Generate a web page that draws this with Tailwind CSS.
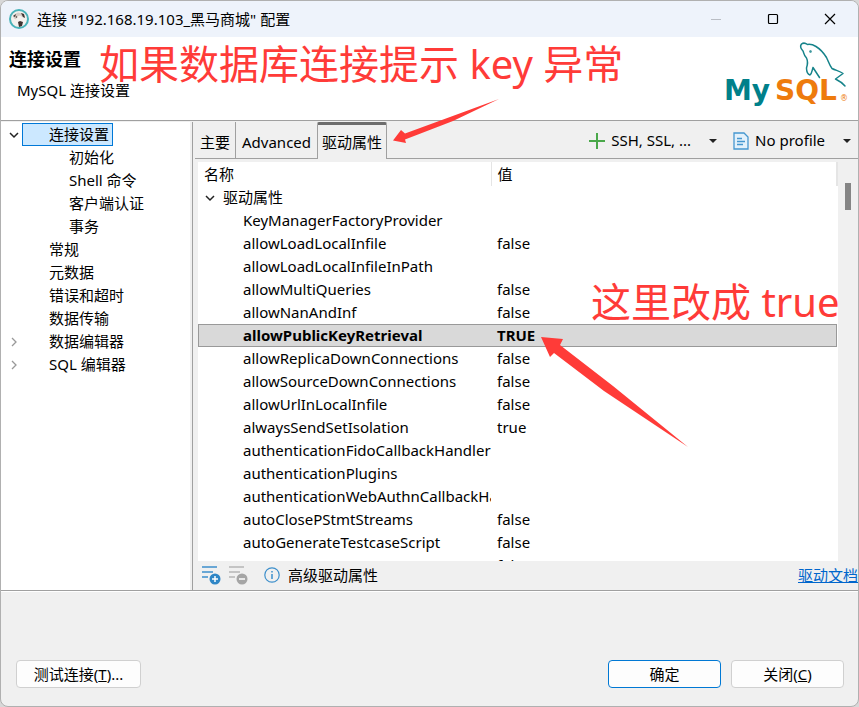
<!DOCTYPE html>
<html lang="zh-CN">
<head>
    <meta charset="UTF-8">
    <meta name="viewport" content="width=device-width, initial-scale=1.0">
    <title>连接 "192.168.19.103_黑马商城" 配置</title>
    <script src="https://cdn.jsdelivr.net/npm/@tailwindcss/browser@4"></script>
</head>

<body class="bg-[#d8d8d8] font-['Noto_Sans','Noto_Sans_CJK_SC',sans-serif] text-[15px] leading-[23px] text-black">
    <div class="relative flex h-screen flex-col overflow-hidden rounded-lg border border-[#b0b0b0] bg-[#f0f0f0]">
        <!-- 标题栏 -->
        <header class="flex h-9 shrink-0 items-center bg-[#eef3fb] pl-2">
            <svg class="mr-2 size-5 shrink-0" viewBox="0 0 20 20">
                <circle cx="10" cy="10" r="9" fill="#f4f1ee" stroke="#49b3b9" stroke-width="2" />
                <path d="M4 7q2-3 5-3.500l5 1 2 3-2 1-3-2-3 1-1 3-2-1z" fill="#d6cec8" />
                <path d="M4 7l3-2-1 3zM12 4l3 1 1 4-2-1zM9 13l2-1 3 1-1 4-3 1z" fill="#3f3431" />
                <circle cx="7.500" cy="8" r="0.800" fill="#3f3431" />
            </svg>
            <h1>连接 "192.168.19.103_黑马商城" 配置</h1>
            <div class="ml-auto flex">
                <button class="flex h-9 w-[57px] items-center justify-center" aria-label="最小化" disabled>
                    <svg class="size-3" viewBox="0 0 12 12"><path d="M1 6.500h10" stroke="#b9bdc4" /></svg>
                </button>
                <button class="flex h-9 w-[57px] items-center justify-center" aria-label="最大化">
                    <svg class="size-3" viewBox="0 0 12 12" fill="none"><rect x="1.500" y="1.500" width="9" height="9" rx="1" stroke="#000" stroke-width="1.200" /></svg>
                </button>
                <button class="flex h-9 w-[57px] items-center justify-center" aria-label="关闭窗口">
                    <svg class="size-3" viewBox="0 0 12 12"><path d="M1 1l10 10M11 1L1 11" stroke="#000" stroke-width="1.200" /></svg>
                </button>
            </div>
        </header>

        <!-- 页头 -->
        <section class="flex h-[84px] shrink-0 justify-between border-b border-[#a0a0a0] bg-white pr-2">
            <div class="pl-2 pt-[11px]">
                <h2 class="text-lg leading-[23px] font-bold">连接设置</h2>
                <p class="pl-2 pt-2">MySQL 连接设置</p>
            </div>
            <svg class="h-[72px] w-32" viewBox="0 0 128 72" role="img" aria-label="MySQL">
                <g fill="none" stroke="#16838a" stroke-width="1.500" stroke-linejoin="round" stroke-linecap="round">
                    <path d="M97.500 40.500L91 30.500c-1 3-1 6-3 7.500-3-1-3.500-4-3.500-7 1-3 1.500-7 0-10-3-3-2.500-5-3.500-7-2-2-3-5-1.500-7 2-1.500 4-1 6 0.500 3-0.500 6 0.500 8.500 2 5 3 8 7 10.500 11 2 4 3 8 5.500 11 4 2 8 2.500 11 5l-7.500 5.500c4 2 7 4 9.500 7" />
                    <circle cx="88.500" cy="14.500" r="0.500" />
                </g>
                <text x="2" y="63" class="font-['DejaVu_Sans'] text-[28px] font-bold" fill="#00808a">My</text>
                <text x="53" y="63" class="font-['DejaVu_Sans'] text-[28px] font-bold" fill="#ee7b0d">SQL</text>
                <text x="118" y="64" class="font-['DejaVu_Sans'] text-[8px]" fill="#ee7b0d">®</text>
            </svg>
        </section>

        <main class="flex min-h-0 flex-1 border-b border-[#a0a0a0] pt-px">
            <!-- 左侧导航树 -->
            <nav class="w-[191px] shrink-0 border-r-2 border-[#f0f0f0] bg-white pt-px">
                <ul>
                    <li>
                        <div class="flex">
                            <span class="flex w-[21px] items-center pl-2"><svg class="size-2.5" viewBox="0 0 10 10" fill="none"><path d="M1 3l4 4 4-4" stroke="#222" stroke-width="1.500" /></svg></span>
                            <span class="h-[23px] border border-[#0078d7] bg-[#cce8ff] pl-[26px] pr-[3px] leading-[21px]">连接设置</span>
                        </div>
                        <ul class="pl-[68px]">
                            <li>初始化</li>
                            <li>Shell 命令</li>
                            <li>客户端认证</li>
                            <li>事务</li>
                        </ul>
                    </li>
                    <li class="pl-12">常规</li>
                    <li class="pl-12">元数据</li>
                    <li class="pl-12">错误和超时</li>
                    <li class="pl-12">数据传输</li>
                    <li class="flex items-center pl-2"><svg class="mr-[30px] size-2.5" viewBox="0 0 10 10" fill="none"><path d="M3 1l4 4-4 4" stroke="#999" stroke-width="1.300" /></svg>数据编辑器</li>
                    <li class="flex items-center pl-2"><svg class="mr-[30px] size-2.5" viewBox="0 0 10 10" fill="none"><path d="M3 1l4 4-4 4" stroke="#999" stroke-width="1.300" /></svg>SQL 编辑器</li>
                </ul>
            </nav>

            <section class="flex min-w-0 flex-1 flex-col border-l border-[#a0a0a0] pl-0.5">
                <!-- 选项卡 -->
                <div class="flex h-[37px] shrink-0">
                    <button class="border-b border-r border-[#a0a0a0] px-[5px] pt-1">主要</button>
                    <button class="border-b border-[#a0a0a0] px-[6px] pt-1">Advanced</button>
                    <button class="rounded-t-xs border-x border-t-3 border-x-[#a0a0a0] border-t-[#6d6d6d] px-1 pt-px">驱动属性</button>
                    <div class="flex flex-1 items-center justify-end border-b border-[#a0a0a0] pr-[7px] pt-px">
                        <button class="flex items-center gap-1.5">
                            <svg class="size-4" viewBox="0 0 16 16"><path d="M8 0v16M0 8h16" stroke="#4aa84a" stroke-width="2" /></svg>
                            SSH, SSL, ...
                            <svg class="ml-3 h-1 w-2" viewBox="0 0 8 4"><path d="M0 0h8L4 4z" fill="#222" /></svg>
                        </button>
                        <button class="ml-4 flex items-center gap-1.5">
                            <svg class="h-[18px] w-4" viewBox="0 0 16 18" fill="none" stroke="#4697cf" stroke-width="1.300">
                                <path d="M1 1h10l4 4v12H1z" fill="#e3f1fb" /><path d="M4 6.500h5M4 9.500h8M4 12.500h6" />
                            </svg>
                            No profile
                            <svg class="ml-3 h-1 w-2" viewBox="0 0 8 4"><path d="M0 0h8L4 4z" fill="#222" /></svg>
                        </button>
                    </div>
                </div>

                <!-- 驱动属性表 -->
                <div class="flex min-h-0 flex-1 pl-[3px] pt-[3px]">
                    <div class="min-w-0 flex-1 overflow-hidden bg-white">
                        <table class="w-full table-fixed border-collapse text-left [&_td]:h-[23px] [&_td]:overflow-hidden [&_td]:p-0 [&_td]:whitespace-nowrap [&_td:first-child]:pl-[45px] [&_td:last-child]:pl-1.5">
                            <thead>
                                <tr class="h-6">
                                    <th class="w-[293px] border-r border-[#e5e5e5] p-0 pl-1.5 font-normal">名称</th>
                                    <th class="border-r-2 border-[#e5e5e5] p-0 pl-1.5 font-normal">值</th>
                                </tr>
                            </thead>
                            <tbody>
                                <tr><th colspan="2" class="h-[23px] p-0 font-normal"><span class="flex items-center pl-[7px]"><svg class="mr-2 size-2.5" viewBox="0 0 10 10" fill="none"><path d="M1 3l4 4 4-4" stroke="#222" stroke-width="1.500" /></svg>驱动属性</span></th></tr>
                                <tr><td>KeyManagerFactoryProvider</td><td></td></tr>
                                <tr><td>allowLoadLocalInfile</td><td>false</td></tr>
                                <tr><td>allowLoadLocalInfileInPath</td><td></td></tr>
                                <tr><td>allowMultiQueries</td><td>false</td></tr>
                                <tr><td>allowNanAndInf</td><td>false</td></tr>
                                <tr class="bg-[#d9d9d9] font-bold outline -outline-offset-1 outline-[#999999]"><td>allowPublicKeyRetrieval</td><td>TRUE</td></tr>
                                <tr><td>allowReplicaDownConnections</td><td>false</td></tr>
                                <tr><td>allowSourceDownConnections</td><td>false</td></tr>
                                <tr><td>allowUrlInLocalInfile</td><td>false</td></tr>
                                <tr><td>alwaysSendSetIsolation</td><td>true</td></tr>
                                <tr><td>authenticationFidoCallbackHandler</td><td></td></tr>
                                <tr><td>authenticationPlugins</td><td></td></tr>
                                <tr><td>authenticationWebAuthnCallbackHandler</td><td></td></tr>
                                <tr><td>autoClosePStmtStreams</td><td>false</td></tr>
                                <tr><td>autoGenerateTestcaseScript</td><td>false</td></tr>
                                <tr><td>autoReconnect</td><td>false</td></tr>
                            </tbody>
                        </table>
                    </div>
                    <div class="w-5 shrink-0 pl-[7px] pt-[21px]">
                        <div class="h-[27px] w-1.5 bg-[#858585]"></div>
                    </div>
                </div>

                <div class="flex h-[29px] shrink-0 items-center overflow-hidden pb-px pl-1.5">
                    <button aria-label="添加属性">
                        <svg class="size-5" viewBox="0 0 20 20" fill="none" stroke="#3d8fcb" stroke-width="1.500">
                            <path d="M1 2h15M1 7h11M1 12h6" /><circle cx="14" cy="14" r="5.500" fill="#2f86c6" stroke="none" /><path d="M14 11v6M11 14h6" stroke="#fff" />
                        </svg>
                    </button>
                    <button class="ml-[7px]" aria-label="删除属性" disabled>
                        <svg class="size-5" viewBox="0 0 20 20" fill="none" stroke="#b5b5b5" stroke-width="1.500">
                            <path d="M1 2h15M1 7h11M1 12h6" /><circle cx="14" cy="14" r="5.500" fill="#a5a5a5" stroke="none" /><path d="M11 14h6" stroke="#fff" />
                        </svg>
                    </button>
                    <svg class="ml-4 size-4" viewBox="0 0 16 16" fill="none" stroke="#3d8fcb" stroke-width="1.200"><circle cx="8" cy="8" r="7.200" /><path d="M8 7v5M8 4v1.500" stroke-width="1.500" /></svg>
                    <span class="ml-2">高级驱动属性</span>
                    <a href="#" class="ml-auto shrink-0 text-[#0066cc] underline">驱动文档</a>
                </div>
            </section>
        </main>

        <!-- 底部按钮 -->
        <footer class="flex h-[115px] shrink-0 items-end gap-2.5 border-t border-white pl-[15px] pr-3.5 pb-[18px]">
            <button class="mr-auto h-7 w-[125px] rounded border border-[#d0d0d0] bg-[#fdfdfd] leading-[26px]">测试连接(<u>T</u>)...</button>
            <button class="h-7 w-[113px] rounded border border-[#0078d4] bg-[#fdfdfd] leading-[26px]">确定</button>
            <button class="h-7 w-[113px] rounded border border-[#d0d0d0] bg-[#fdfdfd] leading-[26px]">关闭(<u>C</u>)</button>
        </footer>

        <!-- 红色标注 -->
        <p class="absolute left-[98px] top-[38px] text-[40px] leading-[50px] text-[#ff3b38]">如果数据库连接提示 key 异常</p>
        <p class="absolute left-[590px] top-[276px] text-[40px] leading-[50px] text-[#ff3b38]">这里改成 true</p>
        <svg class="pointer-events-none absolute left-[391px] top-[97px] h-[48px] w-[110px]" viewBox="392 98 110 48" fill="#ff3b38">
            <path d="M393 140.500L401 130l4 3.500L450 117l49-18-46 22-48 18.500 1 3.500z" />
        </svg>
        <svg class="pointer-events-none absolute left-[539px] top-[334px] h-[114px] w-[150px]" viewBox="540 335 150 114" fill="#ff3b38">
            <path d="M541 337l22 2-3 6 53 41 75 61-84-56-50-38-4 4z" />
        </svg>
    </div>
</body>

</html>
